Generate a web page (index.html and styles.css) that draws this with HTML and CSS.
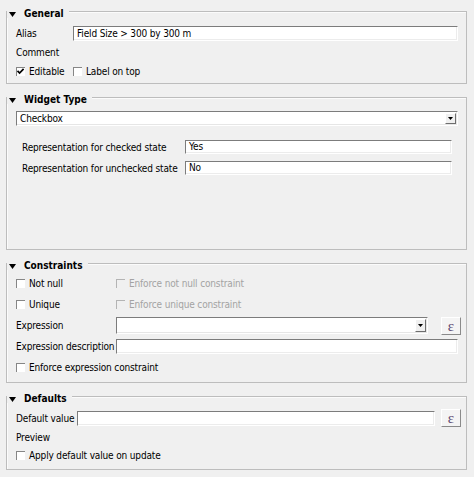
FILE: index.html
```html
<!DOCTYPE html>
<html>
<head>
<meta charset="utf-8">
<link rel="stylesheet" href="styles.css">
</head>
<body>
<div class="page">
  <fieldset class="group">
    <legend class="group-title"><span class="title-inner"><svg class="caret" width="7" height="5" viewBox="0 0 7 5"><path d="M0 0H7L3.5 5Z"/></svg><span>General</span></span></legend>
    <div class="group-body general-body">
      <div class="row grid-general">
        <span class="lbl">Alias</span>
        <div class="field">Field Size &gt; 300 by 300 m</div>
      </div>
      <div class="row"><span class="lbl">Comment</span></div>
      <div class="row grid-general">
        <span class="check-item"><span class="check"><svg width="9" height="9" viewBox="0 0 9 9"><path d="M1.5 3.8L3.6 6L7.6 1.9" fill="none" stroke="#000" stroke-width="1.7"/></svg></span>Editable</span>
        <span class="check-item"><span class="check"></span>Label on top</span>
      </div>
    </div>
  </fieldset>

  <fieldset class="group">
    <legend class="group-title"><span class="title-inner"><svg class="caret" width="7" height="5" viewBox="0 0 7 5"><path d="M0 0H7L3.5 5Z"/></svg><span>Widget Type</span></span></legend>
    <div class="group-body widget-body">
      <div class="combo combo-type">
        <span class="combo-text">Checkbox</span>
        <span class="combo-btn"><svg width="5" height="3" viewBox="0 0 5 3"><path d="M0 0H5L2.5 3Z"/></svg></span>
      </div>
      <div class="rep">
        <div class="rep-row">
          <span class="lbl">Representation for checked state</span>
          <div class="field field-rep">Yes</div>
        </div>
        <div class="rep-row">
          <span class="lbl">Representation for unchecked state</span>
          <div class="field field-rep">No</div>
        </div>
      </div>
    </div>
  </fieldset>

  <fieldset class="group">
    <legend class="group-title"><span class="title-inner"><svg class="caret" width="7" height="5" viewBox="0 0 7 5"><path d="M0 0H7L3.5 5Z"/></svg><span>Constraints</span></span></legend>
    <div class="group-body constraints-body">
      <span class="check-item"><span class="check"></span>Not null</span>
      <span class="check-item disabled"><span class="check"></span>Enforce not null constraint</span>
      <span class="check-item"><span class="check"></span>Unique</span>
      <span class="check-item disabled"><span class="check"></span>Enforce unique constraint</span>
      <span class="lbl">Expression</span>
      <div class="field-with-btn">
        <div class="combo combo-expr">
          <span class="combo-text"></span>
          <span class="combo-btn"><svg width="5" height="3" viewBox="0 0 5 3"><path d="M0 0H5L2.5 3Z"/></svg></span>
        </div>
        <span class="eps-btn">&#949;</span>
      </div>
      <span class="lbl">Expression description</span>
      <div class="field field-desc"></div>
      <span class="check-item span-all"><span class="check"></span>Enforce expression constraint</span>
    </div>
  </fieldset>

  <fieldset class="group">
    <legend class="group-title"><span class="title-inner"><svg class="caret" width="7" height="5" viewBox="0 0 7 5"><path d="M0 0H7L3.5 5Z"/></svg><span>Defaults</span></span></legend>
    <div class="group-body defaults-body">
      <div class="row row-default">
        <span class="lbl lbl-default">Default value</span>
        <div class="field field-default"></div>
        <span class="eps-btn">&#949;</span>
      </div>
      <div class="row"><span class="lbl">Preview</span></div>
      <div class="row"><span class="check-item"><span class="check"></span>Apply default value on update</span></div>
    </div>
  </fieldset>
</div>
</body>
</html>
```

FILE: styles.css
```css
html, body {
  margin: 0;
  padding: 0;
  background: #f0f0f0;
}
body {
  width: 474px;
  height: 477px;
  overflow: hidden;
  font-family: "DejaVu Sans Condensed", "Liberation Sans", sans-serif;
  font-size: 10px;
  letter-spacing: -0.15px;
  color: #000;
}
.page {
  padding: 4px 7px 0 6px;
  display: flex;
  flex-direction: column;
  gap: 6px;
}
.group {
  margin: 0;
  padding: 0;
  min-width: 0;
  border: 1px solid #bdbdbd;
  box-shadow: inset 1px 1px 0 #fbfbfb;
}
.group-title {
  padding: 0 5px 0 2px;
  margin: 0;
  height: 14px;
  background: #f0f0f0;
}
.title-inner {
  display: inline-flex;
  align-items: center;
  box-sizing: content-box;
  height: 14px;
  padding-top: 3px;
  gap: 8px;
  font-weight: bold;
  letter-spacing: 0;
  line-height: 14px;
}
.caret {
  fill: #000;
  display: block;
}
.group-body {
  display: flex;
  flex-direction: column;
  padding: 7px 8px 4px 9px;
}
.row {
  height: 16px;
  display: flex;
  align-items: center;
}
.general-body {
  gap: 3px;
}
.grid-general {
  display: grid;
  grid-template-columns: 57px 1fr;
  align-items: center;
}
.lbl {
  white-space: nowrap;
}
.field {
  box-sizing: border-box;
  height: 15px;
  background: #fff;
  border-top: 1px solid #7c7c7c;
  border-left: 1px solid #7c7c7c;
  border-right: 1px solid #fff;
  border-bottom: 1px solid #fff;
  box-shadow: inset -1px -1px 0 #ececec;
  padding: 0 3px;
  line-height: 13px;
  white-space: nowrap;
  overflow: hidden;
}
.check-item {
  display: flex;
  align-items: center;
  gap: 4px;
  white-space: nowrap;
}
.check {
  box-sizing: border-box;
  width: 9px;
  height: 9px;
  flex: none;
  background: #fff;
  border-top: 1px solid #868686;
  border-left: 1px solid #868686;
  display: flex;
}
.check svg {
  display: block;
  margin: -1px 0 0 -1px;
}
.disabled {
  color: #a3a3a3;
}
.disabled .check {
  background: #f0f0f0;
  border-top-color: #b4b4b4;
  border-left-color: #b4b4b4;
}
/* widget type */
.widget-body {
  box-sizing: border-box;
  height: 145px;
  padding-bottom: 0;
}
.combo {
  box-sizing: border-box;
  display: flex;
  align-items: center;
  background: #fff;
  border-top: 1px solid #7c7c7c;
  border-left: 1px solid #7c7c7c;
  border-right: 1px solid #fff;
  border-bottom: 1px solid #fff;
  box-shadow: inset -1px -1px 0 #e6e6e6;
  padding: 1px 1px 1px 3px;
}
.combo-type {
  height: 15px;
}
.combo-text {
  flex: 1;
  line-height: 12px;
}
.combo-btn {
  box-sizing: border-box;
  width: 11px;
  height: 11px;
  flex: none;
  display: flex;
  align-items: center;
  justify-content: center;
  background: #f0f0f0;
  border-top: 1px solid #fff;
  border-left: 1px solid #fff;
  border-right: 1px solid #6e6e6e;
  border-bottom: 1px solid #6e6e6e;
}
.combo-btn svg {
  fill: #000;
  display: block;
}
.rep {
  margin-top: 5px;
  padding: 9px 6px 0;
  display: flex;
  flex-direction: column;
  gap: 7px;
}
.rep-row {
  display: grid;
  grid-template-columns: 163px 1fr;
  align-items: center;
  height: 14px;
}
.field-rep {
  height: 14px;
  line-height: 12px;
}
/* constraints */
.constraints-body {
  display: grid;
  grid-template-columns: 100px 1fr;
  grid-auto-rows: 17px;
  row-gap: 4px;
  align-items: center;
  padding-top: 5px;
  padding-bottom: 6px;
}
.span-all {
  grid-column: 1 / -1;
}
.field-with-btn {
  display: flex;
  align-items: center;
}
.combo-expr {
  flex: 1;
  height: 17px;
  margin-right: 13px;
}
.combo-expr .combo-btn {
  height: 13px;
}
.eps-btn {
  box-sizing: border-box;
  width: 20px;
  height: 18px;
  flex: none;
  margin-right: -3px;
  display: flex;
  align-items: center;
  justify-content: center;
  background: #f4f4f4;
  border-top: 1px solid #fff;
  border-left: 1px solid #fff;
  border-right: 1px solid #8a8a8a;
  border-bottom: 1px solid #8a8a8a;
  font-family: "Liberation Serif", serif;
  font-size: 15px;
  letter-spacing: 0;
  line-height: 16px;
  color: #5b4870;
}
.field-desc {
  height: 15px;
}
/* defaults */
.defaults-body {
  padding-top: 6px;
  padding-bottom: 6px;
  gap: 2px;
}
.row-default {
  height: 18px;
}
.lbl-default {
  width: 61px;
  flex: none;
}
.field-default {
  flex: 1;
  margin-right: 6px;
}
```
